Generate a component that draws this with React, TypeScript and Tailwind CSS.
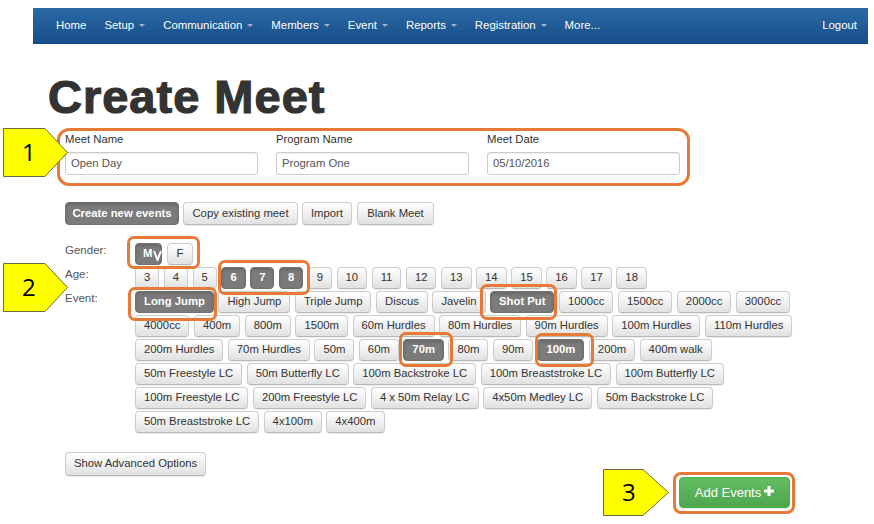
import React from 'react'

const NAV = [
  { label: 'Home', caret: false },
  { label: 'Setup', caret: true },
  { label: 'Communication', caret: true },
  { label: 'Members', caret: true },
  { label: 'Event', caret: true },
  { label: 'Reports', caret: true },
  { label: 'Registration', caret: true },
  { label: 'More...', caret: false },
]

const AGES = ['3', '4', '5', '6', '7', '8', '9', '10', '11', '12', '13', '14', '15', '16', '17', '18']
const ACTIVE_AGES = ['6', '7', '8']

const EVENT_ROWS = [
  ['Long Jump', 'High Jump', 'Triple Jump', 'Discus', 'Javelin', 'Shot Put', '1000cc', '1500cc', '2000cc', '3000cc'],
  ['4000cc', '400m', '800m', '1500m', '60m Hurdles', '80m Hurdles', '90m Hurdles', '100m Hurdles', '110m Hurdles'],
  ['200m Hurdles', '70m Hurdles', '50m', '60m', '70m', '80m', '90m', '100m', '200m', '400m walk'],
  ['50m Freestyle LC', '50m Butterfly LC', '100m Backstroke LC', '100m Breaststroke LC', '100m Butterfly LC'],
  ['100m Freestyle LC', '200m Freestyle LC', '4 x 50m Relay LC', '4x50m Medley LC', '50m Backstroke LC'],
  ['50m Breaststroke LC', '4x100m', '4x400m'],
]
const ACTIVE_EVENTS = ['Long Jump', 'Shot Put', '70m', '100m']

const BTN_BASE = 'relative inline-flex items-center justify-center rounded-[4px] border whitespace-nowrap text-[11.3px] leading-none'
const BTN_OFF = 'bg-linear-to-b from-white to-[#e1e1e1] border-[#cdcdcd] border-b-[#b9b9b9] text-[#333] shadow-[0_1px_1px_rgba(0,0,0,0.08)]'
const BTN_ON = 'bg-[#7b7b7b] border-[#6f6f6f] text-white font-bold shadow-[inset_0_2px_3px_rgba(0,0,0,0.15)]'

function Btn({ label, active, className = '', children }: { label: string; active?: boolean; className?: string; children?: React.ReactNode }) {
  return (
    <span className={`${BTN_BASE} ${active ? BTN_ON : BTN_OFF} ${className}`}>
      {label}
      {children}
    </span>
  )
}

function Callout({ n, className }: { n: string; className: string }) {
  return (
    <div className={`absolute ${className}`}>
      <svg width="68" height="50" viewBox="0 0 68 50" className="absolute inset-0">
        <polygon points="0.5,0.5 42,0.5 64.5,24.5 42,48.5 0.5,48.5" fill="#ffff00" stroke="#6b6b3a" strokeWidth="1" />
      </svg>
      <span className="absolute left-[19px] top-[9px] text-[24px] leading-[30px] text-black font-['Open_Sans','Noto_Sans',sans-serif]">{n}</span>
    </div>
  )
}

function Ring({ className }: { className: string }) {
  return <div className={`absolute border-[3px] border-[#e67a36] pointer-events-none ${className}`} />
}

export default function App() {
  return (
    <div className="relative w-[874px] h-[524px] overflow-hidden bg-white font-['Liberation_Sans',Arial,sans-serif] pt-[8px]">
      {/* Navbar */}
      <nav className="ml-[33px] w-[835px] h-[36px] flex items-center bg-linear-to-b from-[#2b6aa7] to-[#164e88] border-b border-[#12467c] text-white text-[11.4px] pl-[14px] pr-[11px]">
        {NAV.map((item) => (
          <div key={item.label} className="flex items-center px-[9px]">
            {item.label}
            {item.caret && (
              <span className="ml-[5px] mt-[1px] w-0 h-0 border-x-[3px] border-x-transparent border-t-[3px] border-t-[#9db2cc]" />
            )}
          </div>
        ))}
        <div className="ml-auto">Logout</div>
      </nav>

      <h1 className="mt-[29px] ml-[48px] text-[47px] leading-[47px] font-bold tracking-[1px] text-[#333] [-webkit-text-stroke:1.2px_#333]">
        Create Meet
      </h1>

      <div className="ml-[65px]">
        {/* Meet fields */}
        <div className="mt-[12px] flex gap-[18px]">
          {[
            ['Meet Name', 'Open Day'],
            ['Program Name', 'Program One'],
            ['Meet Date', '05/10/2016'],
          ].map(([label, value]) => (
            <div key={label} className="w-[193px]">
              <div className="text-[11.3px] leading-[15px] text-[#333]">{label}</div>
              <div className="mt-[5px] h-[23px] flex items-center px-[5px] border border-[#ccc] rounded-[3px] text-[11.3px] text-[#555] shadow-[inset_0_1px_1px_rgba(0,0,0,0.075)]">
                {value}
              </div>
            </div>
          ))}
        </div>

        {/* Mode buttons */}
        <div className="mt-[27px] flex gap-[4px]">
          <Btn label="Create new events" active className="h-[23px] w-[114px]" />
          <Btn label="Copy existing meet" className="h-[23px] w-[115px]" />
          <Btn label="Import" className="h-[23px] w-[50px]" />
          <Btn label="Blank Meet" className="h-[23px] w-[77px] ml-[1px]" />
        </div>

        {/* Gender / Age / Event */}
        <div className="mt-[18px] flex">
          <div className="w-[70px] flex flex-col text-[11.5px] leading-[14px] text-[#555]">
            <div className="h-[24px]">Gender:</div>
            <div className="h-[24px]">Age:</div>
            <div>Event:</div>
          </div>
          <div className="flex flex-col gap-[2px]">
            <div className="flex gap-[5px]">
              <Btn label="M" active className="h-[22px] w-[27px] justify-start pl-[7px]">
                <svg width="9" height="11" viewBox="0 0 9 11" className="absolute right-[-1px] top-[6px]">
                  <path d="M1 1 L4.5 10 L8 1" fill="none" stroke="white" strokeWidth="2" />
                </svg>
              </Btn>
              <Btn label="F" className="h-[22px] w-[26px]" />
            </div>
            <div className="flex gap-[4.5px]">
              {AGES.map((a) => (
                <Btn key={a} label={a} active={ACTIVE_AGES.includes(a)} className="h-[22px] px-[8px]" />
              ))}
            </div>
            {EVENT_ROWS.map((row, i) => (
              <div key={i} className="flex gap-[4.5px]">
                {row.map((e) => (
                  <Btn key={e} label={e} active={ACTIVE_EVENTS.includes(e)} className="h-[22px] px-[8px]" />
                ))}
              </div>
            ))}
          </div>
        </div>

        <Btn label="Show Advanced Options" className="mt-[19px] h-[24px] px-[8px]" />

        <div className="mt-[1px] ml-[614px] w-[111px] h-[31px] flex items-center justify-center gap-[3px] rounded-[4px] border border-[#4cae4c] bg-linear-to-b from-[#63bd63] to-[#4ea64e] text-white text-[13px] shadow-[0_1px_1px_rgba(0,0,0,0.1)]">
          Add Events
          <svg width="10" height="10" viewBox="0 0 10 10" className="mb-[4px]">
            <rect x="3.5" y="0" width="3" height="10" fill="white" />
            <rect x="0" y="3.5" width="10" height="3" fill="white" />
          </svg>
        </div>
      </div>

      {/* Annotations */}
      <Ring className="left-[57px] top-[128px] w-[633px] h-[58px] rounded-[12px]" />
      <Ring className="left-[127px] top-[236px] w-[73px] h-[33px] rounded-[7px]" />
      <Ring className="left-[218px] top-[260px] w-[92px] h-[35px] rounded-[7px]" />
      <Ring className="left-[128px] top-[287px] w-[89px] h-[34px] rounded-[7px]" />
      <Ring className="left-[480px] top-[284px] w-[77px] h-[36px] rounded-[7px]" />
      <Ring className="left-[399px] top-[332px] w-[54px] h-[35px] rounded-[7px]" />
      <Ring className="left-[535px] top-[333px] w-[59px] h-[34px] rounded-[7px]" />
      <Ring className="left-[673px] top-[472px] w-[122px] h-[42px] rounded-[8px]" />

      <Callout n="1" className="left-[3px] top-[128px] w-[68px] h-[50px]" />
      <Callout n="2" className="left-[3px] top-[263px] w-[68px] h-[50px]" />
      <div className="absolute left-[603px] top-[469px] w-[68px] h-[50px]">
        <svg width="68" height="50" viewBox="0 0 68 50" className="absolute inset-0">
          <polygon points="0.5,0.5 40,0.5 65.5,23.5 40,46.5 0.5,46.5" fill="#ffff00" stroke="#6b6b3a" strokeWidth="1" />
        </svg>
        <span className="absolute left-[19px] top-[8px] text-[24px] leading-[30px] text-black font-['Open_Sans','Noto_Sans',sans-serif]">3</span>
      </div>
    </div>
  )
}
